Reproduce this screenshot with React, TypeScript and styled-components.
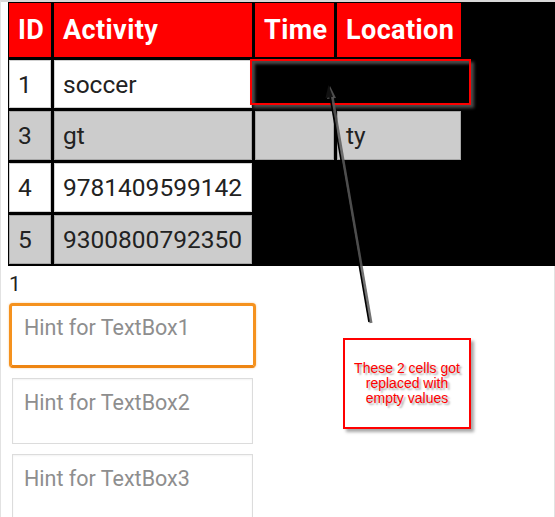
import React from "react";
import styled, { createGlobalStyle } from "styled-components";

const GlobalStyle = createGlobalStyle`
  html, body { margin: 0; padding: 0; background: #ffffff; }
  body { font-family: Roboto, "Noto Sans", Arial, sans-serif; }
  * { box-sizing: border-box; }
`;

const Screen = styled.div`
  position: relative;
  width: 555px;
  height: 517px;
  overflow: hidden;
  background: #ffffff;
  border-top: 2px solid #d8d8d8;
  border-left: 1px solid #e2e2e2;
`;

const Grid = styled.div`
  margin-left: 7px;
  background: #000000;
  padding: 1px 0 2px 1px;
  display: grid;
  grid-template-columns: 42px 198px 79px 124px;
  grid-template-rows: 54px 48px 49px 49px 49px;
  gap: 3px;
`;

const HeadCell = styled.div`
  background: #ff0000;
  color: #ffffff;
  font-family: Roboto, sans-serif;
  font-weight: 700;
  font-size: 27px;
  letter-spacing: 0.4px;
  display: flex;
  align-items: center;
  padding: 0 0 0 9px;
  white-space: nowrap;
  overflow: hidden;
`;

const Cell = styled.div<{ $shade: boolean }>`
  background: ${(p) => (p.$shade ? "#cccccc" : "#ffffff")};
  box-shadow: inset 0 0 0 1px rgba(0, 0, 0, 0.18);
  color: #222222;
  font-family: Roboto, sans-serif;
  font-size: 24.5px;
  display: flex;
  align-items: center;
  padding: 0 0 0 9px;
  white-space: nowrap;
  overflow: hidden;
`;

const Blank = styled.div``;

const Lower = styled.div`
  height: 251px;
  border-right: 1px solid #e2e2e2;
  display: flex;
  flex-direction: column;
  align-items: flex-start;
`;

const Label = styled.div`
  margin: 6px 0 0 8px;
  font-family: Roboto, sans-serif;
  font-size: 21px;
  line-height: 24px;
  color: #222222;
`;

const TextBox = styled.div<{ $focused?: boolean }>`
  flex: none;
  background: #ffffff;
  ${(p) =>
    p.$focused
      ? `
    margin: 7px 0 0 8px;
    width: 247px;
    height: 65px;
    border: 3px solid #f5921e;
    border-bottom-color: #ee8512;
    border-radius: 4px;
    padding: 9px 0 0 12px;
    box-shadow: 0 0 2px rgba(245, 146, 30, 0.5);
  `
      : `
    margin: 9px 0 0 11px;
    width: 241px;
    height: 66px;
    border: 1px solid #dcdcdc;
    padding: 11px 0 0 11px;
    box-shadow: inset 0 1px 2px rgba(0, 0, 0, 0.05);
  `}
  & + & {
    margin-top: ${(p) => (p.$focused ? "7px" : "10px")};
  }
`;

const Hint = styled.span`
  font-family: Roboto, sans-serif;
  font-size: 21.5px;
  line-height: 25px;
  color: #8e8e8e;
  white-space: nowrap;
`;

const Highlight = styled.div`
  position: absolute;
  left: 249px;
  top: 57px;
  width: 221px;
  height: 46px;
  border: 2px solid #ff0000;
  box-shadow: 3px 3px 3px rgba(80, 80, 80, 0.95),
    inset 3px 3px 3px rgba(80, 80, 80, 0.95);
`;

const Callout = styled.div`
  position: absolute;
  left: 342px;
  top: 336px;
  width: 128px;
  height: 91px;
  border: 2px solid #ff0000;
  background: #ffffff;
  box-shadow: 3px 3px 3px rgba(0, 0, 0, 0.35);
  display: flex;
  align-items: center;
  justify-content: center;
  text-align: center;
  padding: 0 4px;
`;

const CalloutText = styled.div`
  font-family: "Liberation Sans", Arial, sans-serif;
  font-size: 14px;
  line-height: 15px;
  color: #ff0000;
  text-shadow: 2px 2px 2px rgba(0, 0, 0, 0.35);
`;

const ArrowLayer = styled.svg`
  position: absolute;
  left: -1px;
  top: -2px;
  width: 555px;
  height: 517px;
  pointer-events: none;
`;

type Row = { id: string; activity: string; time?: string; location?: string; extra: "blank" | "cells" };

const rows: Row[] = [
  { id: "1", activity: "soccer", extra: "blank" },
  { id: "3", activity: "gt", time: "", location: "ty", extra: "cells" },
  { id: "4", activity: "9781409599142", extra: "blank" },
  { id: "5", activity: "9300800792350", extra: "blank" },
];

export default function App() {
  return (
    <>
      <GlobalStyle />
      <Screen>
        <Grid>
          <HeadCell>ID</HeadCell>
          <HeadCell>Activity</HeadCell>
          <HeadCell>Time</HeadCell>
          <HeadCell>Location</HeadCell>
          {rows.map((r, i) => {
            const shade = i % 2 === 1;
            return (
              <React.Fragment key={r.id}>
                <Cell $shade={shade}>{r.id}</Cell>
                <Cell $shade={shade}>{r.activity}</Cell>
                {r.extra === "cells" ? (
                  <>
                    <Cell $shade={shade}>{r.time}</Cell>
                    <Cell $shade={shade}>{r.location}</Cell>
                  </>
                ) : (
                  <>
                    <Blank />
                    <Blank />
                  </>
                )}
              </React.Fragment>
            );
          })}
        </Grid>
        <Lower>
          <Label>1</Label>
          <TextBox $focused>
            <Hint>Hint for TextBox1</Hint>
          </TextBox>
          <TextBox>
            <Hint>Hint for TextBox2</Hint>
          </TextBox>
          <TextBox>
            <Hint>Hint for TextBox3</Hint>
          </TextBox>
        </Lower>
        <Highlight />
        <ArrowLayer viewBox="0 0 555 517">
          <line x1="371" y1="323" x2="332" y2="96" stroke="rgba(90,90,90,0.85)" strokeWidth="3" />
          <polygon points="330,86 327,99 336,98" fill="rgba(90,90,90,0.85)" />
          <line x1="369" y1="322" x2="330" y2="96" stroke="#000000" strokeWidth="1.6" />
          <polygon points="328.5,85 325.5,98 333,97" fill="#111111" />
        </ArrowLayer>
        <Callout>
          <CalloutText>
            These 2 cells got
            <br />
            replaced with
            <br />
            empty values
          </CalloutText>
        </Callout>
      </Screen>
    </>
  );
}
